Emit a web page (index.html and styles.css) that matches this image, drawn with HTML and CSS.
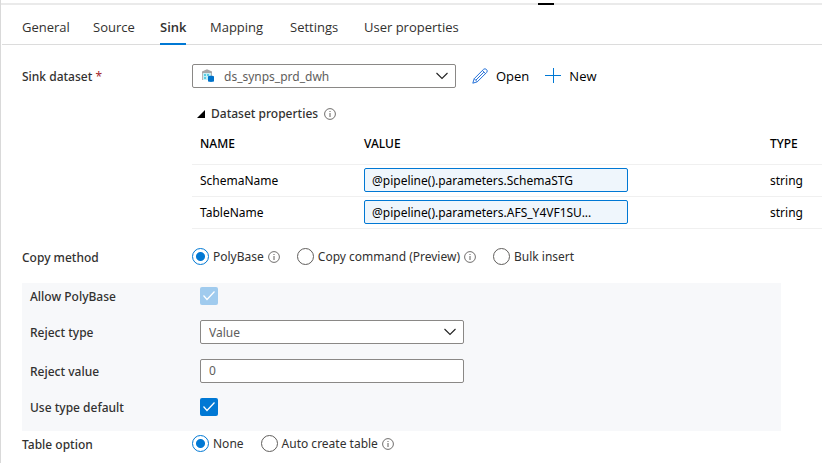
FILE: index.html
```html
<!DOCTYPE html>
<html lang="en">
<head>
<meta charset="utf-8">
<title>Copy activity – Sink</title>
<link rel="stylesheet" href="styles.css">
</head>
<body>
<svg width="0" height="0" class="sprite" aria-hidden="true">
  <symbol id="info" viewBox="0 0 12 12">
    <circle cx="6" cy="6" r="5.4" fill="none" stroke="currentColor" stroke-width=".9"/>
    <path d="M6 5v4M6 3v1" stroke="currentColor" fill="none"/>
  </symbol>
  <symbol id="chevron" viewBox="0 0 12 8">
    <path d="M.5 1 6 6.5 11.5 1" fill="none" stroke="#222" stroke-width="1.1"/>
  </symbol>
</svg>
<main class="pane">
  <div class="splitter"><span class="grip"></span></div>
  <nav class="tabs">
    <a href="#general">General</a>
    <a href="#source">Source</a>
    <a href="#sink" class="active" aria-current="page">Sink</a>
    <a href="#mapping">Mapping</a>
    <a href="#settings">Settings</a>
    <a href="#user">User properties</a>
  </nav>
  <form class="form">
    <div class="row">
      <label class="label" for="dataset">Sink dataset <span class="required">*</span></label>
      <div class="controls">
        <div class="select with-icon">
          <svg class="dataset-icon" viewBox="0 0 14 14" aria-hidden="true">
            <path d="M1 4V2.5L6 .3l5 2.2V4z" fill="#a6a6a6"/>
            <path d="M2 4h8v7H2z" fill="#c5eef5"/>
            <path d="M1.5 4v7M10.5 4v3" stroke="#b5b5b5"/>
            <path d="M3 5h2v2H3zM6 5h2v2H6zM3 8h2v2H3z" fill="#59cbe2"/>
            <path d="M7 7.5c0-1 6-1 6 0V12c0 1.2-6 1.2-6 0z" fill="#0072c9"/>
          </svg>
          <select id="dataset"><option>ds_synps_prd_dwh</option></select>
          <svg class="chevron" aria-hidden="true"><use href="#chevron"/></svg>
        </div>
        <button type="button" class="command">
          <svg width="16" height="16" viewBox="0 0 16 16" fill="none" stroke="#2672d9" aria-hidden="true">
            <path d="M.8 15.2 2.2 10.7 11.6 1.3Q13 .1 14.5 1.5T14.7 4.4L5.3 13.8zM10.4 2.5l3.1 3.1M2.2 10.7l3.1 3.1M4 12l7.8-7.8"/>
          </svg>Open</button>
        <button type="button" class="command">
          <svg width="16" height="16" viewBox="0 0 16 16" fill="#0078d4" shape-rendering="crispEdges" aria-hidden="true">
            <path fill="#0078d4" d="M0 7h16v1H0zM8 0h1v15H8z"/>
          </svg>New</button>
      </div>
    </div>

    <section class="dataset">
      <h2 class="dataset-title">
        <svg width="8" height="8" viewBox="0 0 8 8" aria-hidden="true"><path d="M8 0v8H0z"/></svg>
        Dataset properties
        <svg class="info"><use href="#info"/></svg>
      </h2>
      <table class="properties">
        <thead>
          <tr><th class="name">NAME</th><th>VALUE</th><th class="type">TYPE</th></tr>
        </thead>
        <tbody>
          <tr>
            <td><label for="schema">SchemaName</label></td>
            <td><input id="schema" class="expression" type="text" value="@pipeline().parameters.SchemaSTG"></td>
            <td>string</td>
          </tr>
          <tr>
            <td><label for="table">TableName</label></td>
            <td><input id="table" class="expression" type="text" value="@pipeline().parameters.AFS_Y4VF1SU..."></td>
            <td>string</td>
          </tr>
        </tbody>
      </table>
    </section>

    <div class="row copy-method" role="radiogroup" aria-labelledby="copy-label">
      <span class="label" id="copy-label">Copy method</span>
      <div class="radios">
        <label class="radio"><input type="radio" name="copy" checked>PolyBase<svg class="info"><use href="#info"/></svg></label>
        <label class="radio"><input type="radio" name="copy">Copy command (Preview)<svg class="info"><use href="#info"/></svg></label>
        <label class="radio"><input type="radio" name="copy">Bulk insert</label>
      </div>
    </div>

    <div class="panel">
      <div class="row">
        <label class="label" for="allow">Allow PolyBase</label>
        <span class="check"><input id="allow" type="checkbox" checked disabled>
          <svg viewBox="0 0 18 18" aria-hidden="true"><path d="M3.5 8.5 7 12.5 14.5 4.5"/></svg></span>
      </div>
      <div class="row">
        <label class="label" for="reject-type">Reject type</label>
        <div class="select">
          <select id="reject-type"><option>Value</option></select>
          <svg class="chevron" aria-hidden="true"><use href="#chevron"/></svg>
        </div>
      </div>
      <div class="row">
        <label class="label" for="reject-value">Reject value</label>
        <input id="reject-value" class="text" type="text" value="0">
      </div>
      <div class="row">
        <label class="label" for="type-default">Use type default</label>
        <span class="check"><input id="type-default" type="checkbox" checked>
          <svg viewBox="0 0 18 18" aria-hidden="true"><path d="M3.5 8.5 7 12.5 14.5 4.5"/></svg></span>
      </div>
    </div>

    <div class="row table-option" role="radiogroup" aria-labelledby="option-label">
      <span class="label" id="option-label">Table option</span>
      <div class="radios">
        <label class="radio"><input type="radio" name="option" checked>None</label>
        <label class="radio"><input type="radio" name="option">Auto create table<svg class="info"><use href="#info"/></svg></label>
      </div>
    </div>
  </form>
</main>
</body>
</html>
```
FILE: styles.css
```css
* { box-sizing: border-box; }

body {
  margin: 0;
  background: #fff;
  color: #323130;
  font: 12px/16px "Noto Sans", "Open Sans", sans-serif;
}

input, select, button { font: inherit; margin: 0; }
svg { flex: none; }
.sprite { position: absolute; }

.pane {
  min-height: 100vh;
  padding-top: 3px;
  border-left: 1px solid #d9d9d9;
}

.splitter {
  height: 2px;
  background: #eaeaea;
  display: flex;
  justify-content: center;
  padding-left: 268px;
}
.grip { width: 16px; background: #000; }

.tabs {
  display: grid;
  grid-template-columns: 71px 67px 50px 80px 74px auto;
  justify-content: start;
  justify-items: start;
  height: 40px;
  margin-left: 1px;
  padding-left: 20px;
  border-bottom: 1px solid #dcdcdc;
  font-family: "Open Sans", "Noto Sans", sans-serif;
  font-size: 13px;
}
.tabs a {
  height: 40px;
  line-height: 44px;
  color: #323130;
  text-decoration: none;
  white-space: nowrap;
}
.tabs .active {
  font-weight: 600;
  border-bottom: 2px solid #0078d4;
}

.form { padding: 19px 0 10px 21px; }

.row {
  display: grid;
  grid-template-columns: 170px 1fr;
  align-items: center;
}
.label { padding-top: 2px; font-weight: 500; }
.required { color: #a4262c; font-weight: 400; }

.controls { display: flex; align-items: center; gap: 16px; }

.select { position: relative; width: 264px; height: 24px; }
.select select {
  appearance: none;
  width: 100%;
  height: 24px;
  padding: 2px 28px 0 8px;
}
.select.with-icon select { padding-left: 31px; }
.select select, .text {
  border: 1px solid #8a8886;
  border-radius: 2px;
  background: #fff;
  color: #605e5c;
}
.text { width: 264px; height: 24px; padding: 0 8px; }
.chevron {
  position: absolute;
  right: 8px;
  top: 8px;
  width: 12px;
  height: 8px;
  pointer-events: none;
}
.dataset-icon {
  position: absolute;
  left: 9px;
  top: 5px;
  width: 14px;
  height: 14px;
}

.command {
  display: flex;
  align-items: center;
  gap: 8px;
  padding: 0;
  border: 0;
  background: none;
  color: #000;
  font-family: "Open Sans", "Noto Sans", sans-serif;
  font-size: 13px;
}

.dataset { margin: 16px 0 0 170px; }
.dataset-title {
  display: flex;
  align-items: center;
  gap: 6px;
  height: 20px;
  margin: 0;
  padding-left: 5px;
  font-size: 12px;
  font-weight: 500;
}
.info { width: 12px; height: 12px; color: #605e5c; }

.properties {
  width: 100%;
  border-collapse: collapse;
  table-layout: fixed;
  color: #000;
}
.properties th, .properties td {
  padding: 2px 0 0 8px;
  height: 32px;
  text-align: left;
  border-bottom: 1px solid #f0f0f0;
}
.properties th { height: 40px; padding-top: 0; font-weight: 500; }
.properties th:nth-child(2), .properties td:nth-child(2) { padding: 0; }
.name { width: 172px; }
.type { width: 60px; }
.expression {
  display: block;
  width: 264px;
  height: 24px;
  padding: 0 7px;
  border: 1px solid #0078d4;
  border-radius: 2px;
  background: #eff6fc;
  color: #000;
}

.copy-method { height: 17px; margin: 19px 0 18px; }
.table-option { height: 17px; margin-top: 4px; }
.radios { display: flex; gap: 17px; }
.radio { display: flex; align-items: center; gap: 4px; white-space: nowrap; }
.radio input {
  appearance: none;
  width: 17px;
  height: 17px;
  border: 1px solid #605e5c;
  border-radius: 50%;
  background: #fff;
}
.radio input:checked {
  border-color: #0078d4;
  background: radial-gradient(circle, #0078d4 4px, #fff 5px);
}

.panel {
  display: grid;
  gap: 15px;
  margin-right: 41px;
  padding: 4px 8px 15px;
  background: #f7f8fa;
}
.check { position: relative; width: 18px; height: 18px; }
.check input {
  display: block;
  appearance: none;
  width: 18px;
  height: 18px;
  border-radius: 2px;
  background: #0078d4;
}
.check input:disabled { background: #a0cbee; }
.check svg {
  position: absolute;
  inset: 0;
  fill: none;
  stroke: #fff;
  stroke-width: 1.2;
  pointer-events: none;
}
```
